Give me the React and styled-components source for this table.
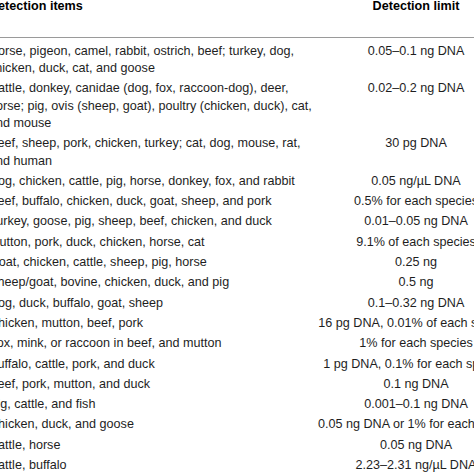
import React from 'react';
import styled, { createGlobalStyle } from 'styled-components';

const GlobalStyle = createGlobalStyle`
  html, body {
    margin: 0;
    padding: 0;
    background: #fff;
    overflow: hidden;
  }
`;

const Page = styled.div`
  width: 474px;
  height: 474px;
  overflow: hidden;
  background: #fff;
`;

const Table = styled.table`
  margin: -4px 0 0 -11px;
  border-collapse: collapse;
  table-layout: fixed;
  width: 525px;
  font-family: "Liberation Sans", Arial, sans-serif;
  font-size: 12.6px;
  line-height: 17.3px;
  color: #1e1e1e;
`;

const Head = styled.thead`
  border-bottom: 1px solid #9a9a9a;
`;

const HeadCell = styled.th`
  padding: 2px 0 22px;
  font-weight: bold;
  color: #000;
  text-align: ${p => (p.$center ? 'center' : 'left')};
  white-space: nowrap;
`;

const Body = styled.tbody`
  &::before {
    content: '';
    display: block;
    height: 3px;
  }
`;

const Cell = styled.td`
  padding: 1.5px 0;
  vertical-align: top;
  text-align: left;
`;

const LimitCell = styled(Cell)`
  text-align: center;
  white-space: nowrap;
`;

const rows = [
  ['Horse, pigeon, camel, rabbit, ostrich, beef; turkey, dog, chicken, duck, cat, and goose', '0.05–0.1 ng DNA'],
  ['Cattle, donkey, canidae (dog, fox, raccoon-dog), deer, horse; pig, ovis (sheep, goat), poultry (chicken, duck), cat, and mouse', '0.02–0.2 ng DNA'],
  ['Beef, sheep, pork, chicken, turkey; cat, dog, mouse, rat, and human', '30 pg DNA'],
  ['Dog, chicken, cattle, pig, horse, donkey, fox, and rabbit', '0.05 ng/µL DNA'],
  ['Beef, buffalo, chicken, duck, goat, sheep, and pork', '0.5% for each species'],
  ['Turkey, goose, pig, sheep, beef, chicken, and duck', '0.01–0.05 ng DNA'],
  ['Mutton, pork, duck, chicken, horse, cat', '9.1% of each species'],
  ['Goat, chicken, cattle, sheep, pig, horse', '0.25 ng'],
  ['Sheep/goat, bovine, chicken, duck, and pig', '0.5 ng'],
  ['Dog, duck, buffalo, goat, sheep', '0.1–0.32 ng DNA'],
  ['Chicken, mutton, beef, pork', '16 pg DNA, 0.01% of each species'],
  ['Fox, mink, or raccoon in beef, and mutton', '1% for each species'],
  ['Buffalo, cattle, pork, and duck', '1 pg DNA, 0.1% for each species'],
  ['Beef, pork, mutton, and duck', '0.1 ng DNA'],
  ['Pig, cattle, and fish', '0.001–0.1 ng DNA'],
  ['Chicken, duck, and goose', '0.05 ng DNA or 1% for each species'],
  ['Cattle, horse', '0.05 ng DNA'],
  ['Cattle, buffalo', '2.23–2.31 ng/µL DNA'],
];

export default function App() {
  return (
    <Page>
      <GlobalStyle />
      <Table>
        <colgroup>
          <col style={{ width: 329 }} />
          <col style={{ width: 196 }} />
        </colgroup>
        <Head>
          <tr>
            <HeadCell>Detection items</HeadCell>
            <HeadCell $center>Detection limit</HeadCell>
          </tr>
        </Head>
        <Body>
          {rows.map(([items, limit]) => (
            <tr key={items}>
              <Cell>{items}</Cell>
              <LimitCell>{limit}</LimitCell>
            </tr>
          ))}
        </Body>
      </Table>
    </Page>
  );
}
